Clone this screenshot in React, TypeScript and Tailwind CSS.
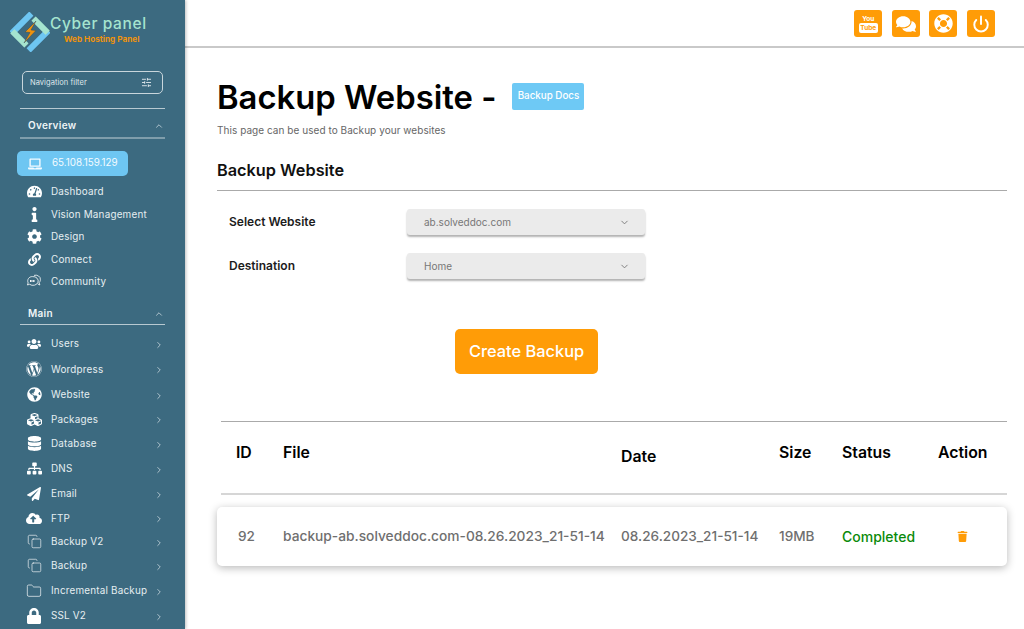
import { ChevronDown, ChevronRight, ChevronUp, Copy, Folder, Power, SlidersHorizontal } from "lucide-react";
import type { ReactNode } from "react";
import {
  FaCloudUploadAlt,
  FaCog,
  FaComments,
  FaCubes,
  FaDatabase,
  FaGlobeAmericas,
  FaInfo,
  FaLaptop,
  FaLifeRing,
  FaLink,
  FaLock,
  FaPaperPlane,
  FaSitemap,
  FaTachometerAlt,
  FaTrash,
  FaUsers,
  FaWordpress,
} from "react-icons/fa";

function Logo() {
  return (
    <svg viewBox="0 0 40 40" className="h-[40px] w-[40px] shrink-0" aria-hidden>
      <g transform="rotate(45 20 20)">
        <rect x="5" y="6" width="6" height="28" rx="0.5" fill="#6ec6f2" />
        <rect x="29" y="6" width="6" height="28" rx="0.5" fill="#6ec6f2" />
        <rect x="13" y="5" width="20" height="6" rx="0.5" fill="#a5e4cf" />
        <rect x="7" y="29" width="20" height="6" rx="0.5" fill="#a5e4cf" />
      </g>
      <path d="M26 9 L15 20 L20 20.5 L14 31 L26 18.5 L21 18 Z" fill="#f0920c" stroke="#2f4f60" strokeWidth="0.5" />
    </svg>
  );
}

function CommunityIcon() {
  return (
    <svg viewBox="0 0 20 18" className="h-[16px] w-[17px]" fill="none" stroke="currentColor" strokeWidth="1" aria-hidden>
      <path d="M8 3.5a6.5 5.5 0 1 1-3.5 9.6L1.8 14l.9-2.6A5.5 5.5 0 0 1 8 3.5Z" />
      <path d="M10 2a6 5 0 0 1 8 5c0 2-.7 3.2-1.6 4l.9 3-2.7-1.3" />
      <path d="M5 9h6" strokeWidth="2.2" strokeDasharray="1.2 .6" />
    </svg>
  );
}

function YoutubeBadge() {
  return (
    <span className="flex flex-col items-center leading-none">
      <span className="text-[6.5px] font-bold leading-[8px]">You</span>
      <span className="rounded-[2px] bg-white px-[1.5px] text-[6.5px] font-bold leading-[10px] text-[#ff9c07]">Tube</span>
    </span>
  );
}

function SectionHead({ title }: { title: string }) {
  return (
    <div className="mx-[20px] flex items-center justify-between pl-[8px] pr-[1px]">
      <span className="text-[10px] font-semibold leading-[15px] tracking-[0.3px] text-[#eef4f6]">{title}</span>
      <ChevronUp size={10} className="text-[#c4d4db]" />
    </div>
  );
}

type NavItem = { label: string; icon: ReactNode; row: string; text?: string };

const overview: NavItem[] = [
  { label: "Dashboard", icon: <FaTachometerAlt size={15} />, row: "h-[23px]" },
  { label: "Vision Management", icon: <FaInfo size={15} />, row: "h-[22px]" },
  { label: "Design", icon: <FaCog size={15} />, row: "h-[23px]" },
  { label: "Connect", icon: <FaLink size={13} />, row: "h-[22px]", text: "ml-[1px]" },
  { label: "Community", icon: <CommunityIcon />, row: "h-[22px]" },
];

const main: NavItem[] = [
  { label: "Users", icon: <FaUsers size={14} />, row: "h-[25px]" },
  { label: "Wordpress", icon: <FaWordpress size={16} />, row: "h-[26px]" },
  { label: "Website", icon: <FaGlobeAmericas size={15} />, row: "h-[25px]" },
  { label: "Packages", icon: <FaCubes size={15} />, row: "h-[24px]", text: "ml-[1px]" },
  { label: "Database", icon: <FaDatabase size={15} />, row: "h-[25px]", text: "ml-[1px]" },
  { label: "DNS", icon: <FaSitemap size={15} />, row: "h-[25px]", text: "ml-[1px]" },
  { label: "Email", icon: <FaPaperPlane size={14} />, row: "h-[25px]" },
  { label: "FTP", icon: <FaCloudUploadAlt size={17} />, row: "h-[24px]" },
  { label: "Backup V2", icon: <Copy size={15} strokeWidth={1} />, row: "h-[23px]" },
  { label: "Backup", icon: <Copy size={15} strokeWidth={1} />, row: "h-[25px]" },
  { label: "Incremental Backup", icon: <Folder size={16} strokeWidth={1} />, row: "h-[25px]", text: "ml-[1px]" },
  { label: "SSL V2", icon: <FaLock size={16} />, row: "h-[25px]", text: "ml-[1px]" },
];

function Row({ item, arrow }: { item: NavItem; arrow?: boolean }) {
  return (
    <div className={`${item.row} flex items-center pl-[26px] pr-[21px] text-[#e6eef1]`}>
      <span className="flex w-[16px] justify-center text-white">{item.icon}</span>
      <span className={`${item.text ?? ""} ml-[9px] whitespace-nowrap text-[9.9px] tracking-[0.2px]`}>{item.label}</span>
      {arrow && <ChevronRight size={10} className="ml-auto mt-[2px] shrink-0 text-[#c4d4db]" />}
    </div>
  );
}

function Sidebar() {
  return (
    <aside className="z-10 h-[629px] w-[185px] shrink-0 overflow-hidden bg-[#3c6a80] shadow-[1px_0_3px_rgba(0,0,0,0.25)]">
      <div className="flex h-[71px] items-start pl-[10px] pt-[12px]">
        <Logo />
        <div className="mt-[2px] flex flex-col items-start">
          <span className="text-[15.5px] font-medium leading-[20px] tracking-[0.6px] text-[#a5e4cf]">Cyber panel</span>
          <span className="ml-[14px] text-[8.2px] font-bold leading-[10px] text-[#f0920c]">Web Hosting Panel</span>
        </div>
      </div>
      <div className="mx-[22px] flex h-[23px] items-center justify-between rounded-[5px] border border-[#c9d6dc] pl-[7px] pr-[10px] text-[#dfe8ec]">
        <span className="text-[7.5px] tracking-[0.05px]">Navigation filter</span>
        <SlidersHorizontal size={11} />
      </div>
      <div className="mx-[20px] mt-[14px] h-px bg-[#b8c9d1]" />
      <div className="h-[9px]" />
      <SectionHead title="Overview" />
      <div className="mx-[20px] mt-[4px] h-[2px] bg-[#7f9dab]" />
      <div className="ml-[17px] mt-[12px] flex h-[25px] w-[111px] items-center rounded-[5px] bg-[#6ec6f2] pl-[11px] text-[#f4fbff]">
        <FaLaptop size={14} />
        <span className="ml-[10px] text-[9.8px]">65.108.159.129</span>
      </div>
      <div className="mt-[4px]">
        {overview.map((item) => (
          <Row key={item.label} item={item} />
        ))}
      </div>
      <div className="mt-[14px]">
        <SectionHead title="Main" />
      </div>
      <div className="mx-[20px] mt-[3px] h-px bg-[#b8c9d1]" />
      <div className="mt-[6px]">
        {main.map((item) => (
          <Row key={item.label} item={item} arrow />
        ))}
      </div>
    </aside>
  );
}

function TopButton({ children }: { children: ReactNode }) {
  return (
    <span className="flex h-[27px] w-[28px] items-center justify-center rounded-[3px] bg-[#ff9c07] text-white">
      {children}
    </span>
  );
}

function SelectRow({ label, value }: { label: string; value: string }) {
  return (
    <div className="flex h-[44px] items-center pl-[12px]">
      <span className="w-[178px] text-[12px] font-semibold text-[#1c1c1c]">{label}</span>
      <div className="flex h-[26px] w-[238px] items-center justify-between rounded-[3px] bg-[#ebebeb] pl-[17px] pr-[15px] text-[#777] shadow-[0_2px_2px_rgba(0,0,0,0.3)]">
        <span className="text-[10px]">{value}</span>
        <ChevronDown size={11} />
      </div>
    </div>
  );
}

export default function App() {
  return (
    <div className="flex h-[629px] w-[1024px] overflow-hidden bg-white font-['Inter','Liberation_Sans',sans-serif]">
      <Sidebar />
      <main className="min-w-0 flex-1">
        <header className="flex h-[48px] items-start justify-end gap-[9.6px] border-b-2 border-[#c9c9c9] pr-[29px] pt-[10px]">
          <TopButton>
            <YoutubeBadge />
          </TopButton>
          <TopButton>
            <FaComments size={20} />
          </TopButton>
          <TopButton>
            <FaLifeRing size={19} />
          </TopButton>
          <TopButton>
            <Power size={18} strokeWidth={2.6} />
          </TopButton>
        </header>

        <section className="pl-[32px] pr-[17px]">
          <div className="mt-[29px] flex h-[42px] items-center">
            <h1 className="whitespace-nowrap text-[32.8px] font-semibold text-black">Backup Website -</h1>
            <span className="mb-[3px] ml-[16px] flex h-[27px] w-[72px] items-center justify-center rounded-[2px] bg-[#6ec9f5] text-[9.8px] font-medium text-white">
              Backup Docs
            </span>
          </div>
          <p className="mt-[4px] text-[10px] leading-[15px] tracking-[0.05px] text-[#666]">This page can be used to Backup your websites</p>
          <h2 className="mt-[22px] text-[16.3px] font-semibold leading-[20px] text-[#111]">Backup Website</h2>
          <div className="mt-[10px] h-px bg-[#aaa]" />
          <div className="mt-[9px]">
            <SelectRow label="Select Website" value="ab.solveddoc.com" />
            <SelectRow label="Destination" value="Home" />
          </div>
          <div className="mt-[41px] flex pl-[238px]">
            <button className="flex h-[45px] w-[143px] items-center justify-center rounded-[5px] bg-[#ff9c07] text-[16.4px] font-medium text-white">
              Create Backup
            </button>
          </div>
        </section>

        <section className="mt-[47px] pl-[36px] pr-[17px]">
          <div className="h-px bg-[#aaa]" />
          <div className="flex h-[71px] text-[15.8px] font-semibold text-black">
            <span className="w-[62px] pl-[15px] pt-[19px]">ID</span>
            <span className="w-[338px] pt-[19px]">File</span>
            <span className="w-[158px] pt-[23px]">Date</span>
            <span className="w-[63px] pt-[19px]">Size</span>
            <span className="w-[96px] pt-[19px]">Status</span>
            <span className="pt-[19px]">Action</span>
          </div>
          <div className="h-[2px] bg-[#d6d6d6]" />
        </section>

        <section className="mt-[12px] pl-[32px] pr-[17px]">
          <div className="flex h-[59px] items-center rounded-[5px] bg-white text-[13.6px] font-medium text-[#6f6f6f] shadow-[0_2px_8px_rgba(0,0,0,0.28)]">
            <span className="w-[66px] pl-[21px]">92</span>
            <span className="w-[338px] whitespace-nowrap text-[13.75px]">backup-ab.solveddoc.com-08.26.2023_21-51-14</span>
            <span className="w-[158px] whitespace-nowrap">08.26.2023_21-51-14</span>
            <span className="w-[63px]">19MB</span>
            <span className="w-[96px] text-[14px] text-[#0a8a0a]">Completed</span>
            <span className="pl-[19px] text-[#ff9c07]">
              <FaTrash size={11} />
            </span>
          </div>
        </section>
      </main>
    </div>
  );
}
